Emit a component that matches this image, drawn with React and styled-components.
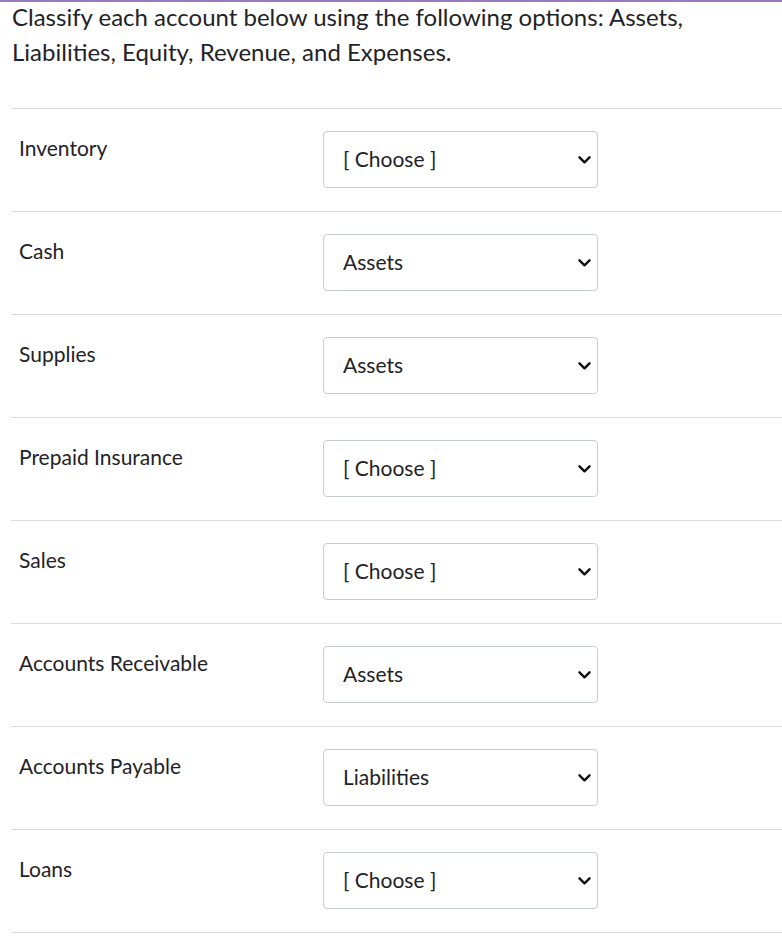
import React from "react";
import styled, { createGlobalStyle } from "styled-components";

const Global = createGlobalStyle`
  html, body { margin: 0; padding: 0; background: #fff; }
  body { font-family: Lato, "Open Sans", sans-serif; color: #1f2327; }
  * { box-sizing: border-box; }
`;

const Page = styled.div`
  width: 782px;
  border-top: 2px solid #9b7bc0;
`;

const Question = styled.p`
  margin: 0;
  padding: 0 0 0 12px;
  font-size: 24px;
  line-height: 35px;
  position: relative;
  top: -3px;
  color: #1f2327;
`;

const List = styled.div`
  margin-top: 36px;
  margin-left: 11px;
  border-top: 1px solid #dddddd;
`;

const Row = styled.div`
  display: grid;
  grid-template-columns: 304px 275px;
  align-items: start;
  padding: 22px 0 23px 8px;
  border-bottom: 1px solid #dddddd;
`;

const Label = styled.div`
  font-size: 21px;
  line-height: 30px;
  padding-top: 2px;
  color: #1f2327;
`;

const SelectWrap = styled.div`
  position: relative;
  width: 275px;
  height: 57px;
`;

const Select = styled.select`
  appearance: none;
  -webkit-appearance: none;
  width: 100%;
  height: 100%;
  border: 1px solid #c7cdd1;
  border-radius: 4px;
  background: #fff;
  padding: 0 36px 2px 19px;
  font-family: Lato, "Open Sans", sans-serif;
  font-size: 21px;
  color: #1f2327;
  outline: none;
`;

const Chevron = styled.svg`
  position: absolute;
  right: 7px;
  top: 50%;
  transform: translateY(-50%);
  width: 13px;
  height: 9px;
  pointer-events: none;
`;

const rows = [
  ["Inventory", "[ Choose ]"],
  ["Cash", "Assets"],
  ["Supplies", "Assets"],
  ["Prepaid Insurance", "[ Choose ]"],
  ["Sales", "[ Choose ]"],
  ["Accounts Receivable", "Assets"],
  ["Accounts Payable", "Liabilities"],
  ["Loans", "[ Choose ]"],
];

const options = ["[ Choose ]", "Assets", "Liabilities", "Equity", "Revenue", "Expenses"];

export default function App() {
  return (
    <>
      <Global />
      <Page>
        <Question>
          Classify each account below using the following options: Assets,
          Liabilities, Equity, Revenue, and Expenses.
        </Question>
        <List>
          {rows.map(([label, value]) => (
            <Row key={label}>
              <Label>{label}</Label>
              <SelectWrap>
                <Select defaultValue={value} aria-label={label}>
                  {options.map((o) => (
                    <option key={o} value={o}>{o}</option>
                  ))}
                </Select>
                <Chevron viewBox="0 0 13 9">
                  <path d="M1.5 1.8 L6.5 6.8 L11.5 1.8" fill="none" stroke="#111" strokeWidth="2.4" strokeLinecap="round" strokeLinejoin="round" />
                </Chevron>
              </SelectWrap>
            </Row>
          ))}
        </List>
      </Page>
    </>
  );
}
